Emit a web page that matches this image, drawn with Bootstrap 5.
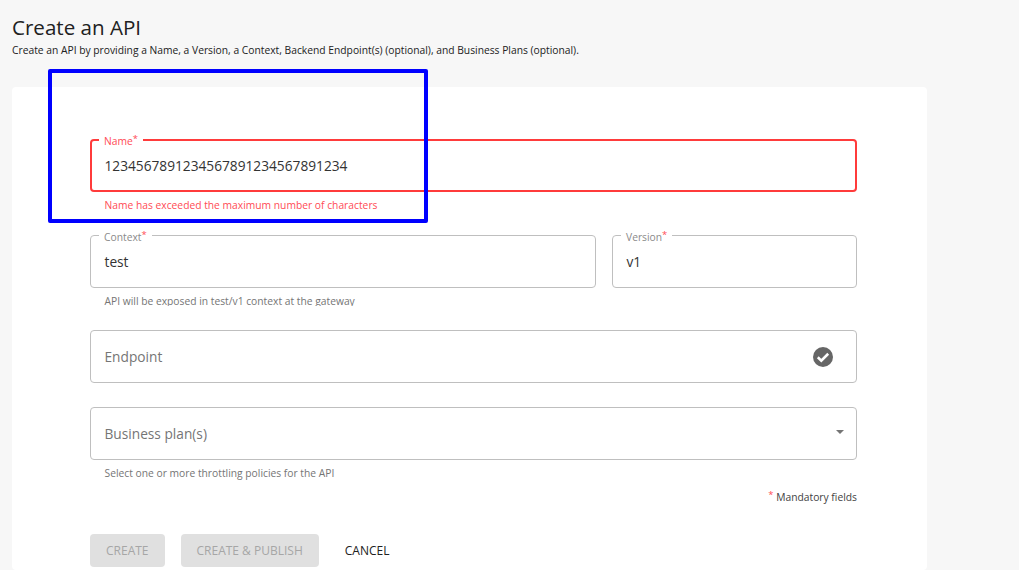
<!DOCTYPE html>
<html lang="en">
<head>
<meta charset="utf-8">
<title>Create an API</title>
<link rel="stylesheet" href="https://cdn.jsdelivr.net/npm/bootstrap@5.3.0/dist/css/bootstrap.min.css">
<style>
html, body { height: 570px; overflow: hidden; }
body { background: #f7f7f7; font-family: "Open Sans", sans-serif; color: #212121; position: relative; }
.page-wrap { padding: 15px 0 0 12px; width: 927px; }
.page-title { font-size: 20.57px; line-height: 24px; font-weight: 400; margin: 0; color: #212121; }
.page-sub { font-size: 10.29px; line-height: 16px; margin: 3px 0 0; color: #212121; }
.form-panel { background: #fff; border-radius: 4px; margin-top: 29px; padding: 52px 70px 0 78px; height: 483px; overflow: hidden; }
.fld { position: relative; height: 53px; border: 1px solid #bfbfbf; border-radius: 4px; padding: 0 13.5px; display: flex; align-items: center; justify-content: space-between; font-size: 13.71px; color: #333; }
.fld-err { border: 2px solid #ff3b3b; padding: 0 12.5px; }
.fld-label { position: absolute; top: -6px; left: 8px; padding: 0 5px; background: #fff; font-size: 10.29px; line-height: 14px; color: #8a8a8a; }
.fld-err .fld-label { top: -7px; left: 7px; color: #ff4b55; }
.fld-label::before { content: ""; position: absolute; left: 0; right: 0; top: -4px; height: 4px; background: #fff; }
.req { color: #ff4b55; position: relative; top: -3px; font-size: 9.5px; }
.val { padding-top: 2px; }
.ph { color: #757575; padding-top: 2px; }
.hint { font-size: 10.29px; line-height: 14px; padding: 6px 0 0 14.5px; margin: 0; color: #757575; }
.hint-err { color: #ff4b55; }
.hint-clip { height: 18px; overflow: hidden; }
.mandatory { font-size: 10.29px; line-height: 14px; color: #424242; text-align: right; margin: 10px 0 0; }
.ctx-col { flex: 1 1 auto; }
.ver-col { flex: 0 0 245px; }
.stack-name { margin-top: 23px; }
.stack-next { margin-top: 24px; }
.stack-btns { margin-top: 29px; }
.act { font-size: 12px; line-height: 16px; height: 33px; border: 0; border-radius: 4px; padding: 0 16px; }
.act:disabled { background: #e0e0e0; color: #a6a6a6; opacity: 1; }
.act-link { background: transparent; color: #212121; padding: 0 10px; }
.caret { width: 0; height: 0; border-left: 4.5px solid transparent; border-right: 4.5px solid transparent; border-top: 4.5px solid #757575; margin-right: -1.5px; margin-top: -3px; }
.ok-icon { margin-right: 9.5px; }
.blue-box { position: absolute; left: 48px; top: 69px; width: 380px; height: 154px; border: 4px solid #0000ff; border-radius: 2px; pointer-events: none; }
</style>
</head>
<body>
<div class="page-wrap">
  <h1 class="page-title">Create an API</h1>
  <p class="page-sub">Create an API by providing a Name, a Version, a Context, Backend Endpoint(s) (optional), and Business Plans (optional).</p>

  <div class="form-panel">
    <div class="fld fld-err">
      <span class="fld-label">Name<span class="req">*</span></span>
      <span class="val">1234567891234567891234567891234</span>
    </div>
    <p class="hint hint-err">Name has exceeded the maximum number of characters</p>

    <div class="d-flex gap-3 stack-name">
      <div class="ctx-col">
        <div class="fld">
          <span class="fld-label">Context<span class="req">*</span></span>
          <span class="val">test</span>
        </div>
        <p class="hint hint-clip">API will be exposed in test/v1 context at the gateway</p>
      </div>
      <div class="ver-col">
        <div class="fld">
          <span class="fld-label">Version<span class="req">*</span></span>
          <span class="val">v1</span>
        </div>
      </div>
    </div>

    <div class="fld stack-next">
      <span class="ph">Endpoint</span>
      <svg width="20" height="20" viewBox="0 0 20 20" class="ok-icon" aria-hidden="true">
        <circle cx="10" cy="10" r="10" fill="#666"/>
        <path d="M4.8 10.3 8.3 13.6 15.2 6.8" fill="none" stroke="#fff" stroke-width="2.6"/>
      </svg>
    </div>

    <div class="fld stack-next">
      <span class="ph">Business plan(s)</span>
      <span class="caret"></span>
    </div>
    <p class="hint">Select one or more throttling policies for the API</p>

    <p class="mandatory"><span class="req">*</span> Mandatory fields</p>

    <div class="d-flex gap-3 stack-btns">
      <button class="btn act" disabled>CREATE</button>
      <button class="btn act" disabled>CREATE &amp; PUBLISH</button>
      <button class="btn act act-link">CANCEL</button>
    </div>
  </div>
</div>
<div class="blue-box"></div>
<script src="https://cdn.jsdelivr.net/npm/bootstrap@5.3.0/dist/js/bootstrap.bundle.min.js"></script>
</body>
</html>
